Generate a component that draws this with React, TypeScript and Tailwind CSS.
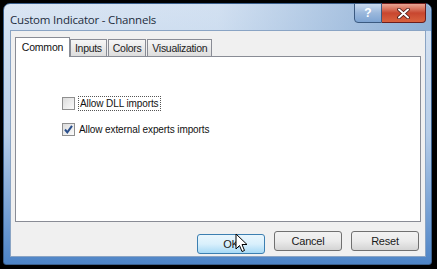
import React from "react";

const tabs = ["Common", "Inputs", "Colors", "Visualization"];

function CheckBox({ checked }: { checked?: boolean }) {
  return (
    <span className="relative w-[13px] h-[13px] border border-[#8f8f8f] bg-gradient-to-br from-[#dcdcdc] to-[#fbfbfb] flex items-center justify-center">
      {checked && (
        <svg width="11" height="11" viewBox="0 0 11 11">
          <path d="M2 5.5 L4.3 8.3 L9 1.8" fill="none" stroke="#2a4f8c" strokeWidth="2" />
        </svg>
      )}
    </span>
  );
}

function Btn({ label, active }: { label: string; active?: boolean }) {
  return (
    <button
      type="button"
      className={
        "w-[68px] h-[20px] rounded-[3px] border text-[11px] tracking-[-0.2px] text-[#1a1a1a] " +
        (active
          ? "border-[#3c7fb1] bg-gradient-to-b from-[#eaf6fd] via-[#d9f0fc] to-[#a7d9f5]"
          : "border-[#707070] bg-gradient-to-b from-[#f2f2f2] via-[#ebebeb] to-[#d4d4d4]")
      }
    >
      {label}
    </button>
  );
}

export default function App() {
  return (
    <div className="w-[437px] h-[269px] bg-black pt-[3px] pl-[3px] pr-[5px] pb-[4px]" style={{ fontFamily: "'Liberation Sans', Arial, sans-serif" }}>
      <div className="relative w-full h-full rounded-t-[7px] rounded-b-[3px] border border-[#3a5f8c] bg-gradient-to-b from-[#dbe6f3] via-[#b6cde8] to-[#4d84c6] flex flex-col">
        <div className="absolute inset-x-0 top-0 h-[27px] rounded-t-[7px] bg-gradient-to-r from-transparent via-[#c5d8ee]/40 to-[#6f99c9]/70" />
        <div className="relative h-[26px] flex items-start justify-between">
          <span className="ml-[6px] mt-[7px] text-[11.5px] tracking-[-0.2px] text-[#1e2d3d]" style={{ fontFamily: "'Open Sans', sans-serif" }}>Custom Indicator - Channels</span>
          <div className="flex mr-[5px] -mt-px">
            <div className="w-[28px] h-[20px] rounded-bl-[4px] border border-[#3b5a80] bg-gradient-to-b from-[#c9daef] via-[#9bb8dc] to-[#7ea4d2] flex items-center justify-center text-white text-[12px] font-bold">?</div>
            <div className="w-[44px] h-[20px] rounded-br-[4px] border border-l-0 border-[#6b1e1e] bg-gradient-to-b from-[#e8a493] via-[#c8462f] to-[#d9623f] flex items-center justify-center">
              <svg width="13" height="11" viewBox="0 0 13 11">
                <path d="M2 1.5 L11 9.5 M11 1.5 L2 9.5" stroke="#3d1010" strokeWidth="3.5" strokeLinecap="round" />
                <path d="M2 1.5 L11 9.5 M11 1.5 L2 9.5" stroke="#ffffff" strokeWidth="2" strokeLinecap="round" />
              </svg>
            </div>
          </div>
        </div>
        <div className="relative flex-1 mx-[6px] mb-[7px] mr-[5px] border border-[#8aa4c4] bg-[#f0f0f0] flex flex-col pt-[6px] px-[4px]">
          <div className="flex items-end h-[20px] pl-0">
            {tabs.map((t, i) => (
              <div
                key={t}
                className={
                  i === 0
                    ? "relative z-10 -mr-[1px] h-[20px] w-[55px] justify-center border border-b-0 border-[#898c95] bg-white text-[10.5px] tracking-[-0.2px] text-[#111] flex items-center"
                    : "h-[18px] px-[4px] border border-b-0 border-[#898c95] ml-px bg-gradient-to-b from-[#f6f6f6] to-[#dcdcdc] text-[10.5px] tracking-[-0.3px] text-[#222] flex items-center"
                }
              >
                {t}
              </div>
            ))}
          </div>
          <div className="h-[166px] -mt-px border border-[#898c95] bg-white pl-[46px] pt-[39px] flex flex-col gap-[12px] text-[10px] tracking-[-0.1px] text-[#111]">
            <div className="flex items-center gap-[3px]">
              <CheckBox />
              <span className="border border-dotted border-[#555] px-px leading-[13px]">Allow DLL imports</span>
            </div>
            <div className="flex items-center gap-[4px]">
              <CheckBox checked />
              <span className="leading-[13px]">Allow external experts imports</span>
            </div>
          </div>
          <div className="flex justify-end gap-[9px] mt-[9px] pr-[2px]">
            <div className="relative">
              <Btn label="OK" active />
              <svg className="absolute left-[38px] top-[2px]" width="13" height="20" viewBox="0 0 13 20">
                <path d="M1 1 L1 16 L4.5 12.5 L7 18.5 L9.5 17.5 L7 11.5 L12 11.5 Z" fill="#ffffff" stroke="#000" strokeWidth="1" strokeLinejoin="round" />
              </svg>
            </div>
            <Btn label="Cancel" />
            <Btn label="Reset" />
          </div>
        </div>
      </div>
    </div>
  );
}
